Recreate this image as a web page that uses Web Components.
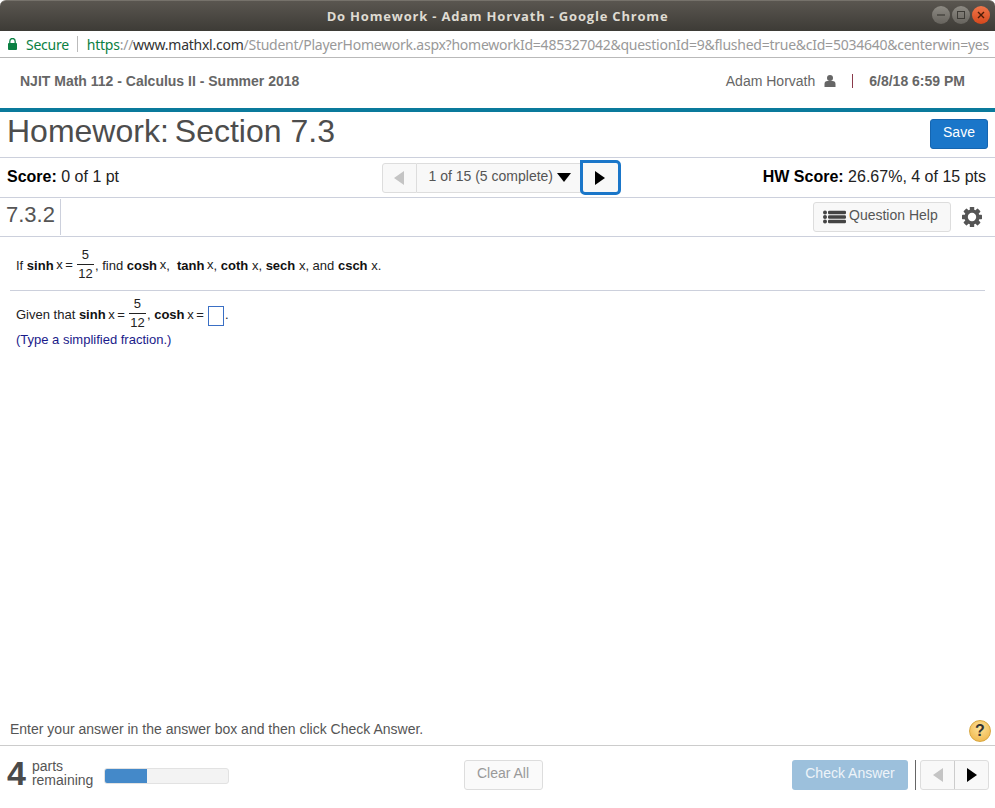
<!DOCTYPE html>
<html>
<head>
<meta charset="utf-8">
<title>Do Homework</title>
<style>
    html, body { margin: 0; padding: 0; height: 808px; overflow: hidden; background: #fff; }
    body { display: flex; flex-direction: column; font-family: "Liberation Sans", Arial, sans-serif; }
    hw-problem { flex: 1; }
</style>
</head>
<body>
<chrome-bar></chrome-bar>
<hw-header></hw-header>
<hw-title></hw-title>
<hw-score></hw-score>
<hw-question></hw-question>
<hw-problem></hw-problem>
<hw-footer></hw-footer>

<script>
const LEFT_ARROW = (c) => `<svg width="10" height="14" viewBox="0 0 10 14"><path d="M10 0V14L0 7Z" fill="${c}"/></svg>`;
const RIGHT_ARROW = `<svg width="10" height="14" viewBox="0 0 10 14"><path d="M0 0V14L10 7Z" fill="#000"/></svg>`;

class Base extends HTMLElement {
    constructor() {
        super();
        this.attachShadow({ mode: 'open' });
        this.shadowRoot.innerHTML = this.markup();
    }
}

class ChromeBar extends Base {
    markup() {
        return `
        <style>
            :host { display: block; }
            .title {
                height: 31px;
                box-sizing: border-box;
                display: flex; align-items: center; justify-content: center;
                position: relative;
                background: linear-gradient(#5a5650, #3d3b36);
                border-top: 1px solid #76726b;
                border-radius: 6px 6px 0 0;
                color: #dfdbd2;
                font: bold 13px "Open Sans", sans-serif;
                letter-spacing: 0.8px;
            }
            .btns { position: absolute; right: 5px; top: 5px; display: flex; gap: 2px; }
            .btn {
                width: 18px; height: 18px; border-radius: 50%;
                background: linear-gradient(#8d8a83, #66635d);
                display: flex; align-items: center; justify-content: center;
            }
            .btn.close { background: linear-gradient(#f0764a, #d4481c); }
            .url {
                height: 26px;
                display: flex; align-items: center;
                border-bottom: 1px solid #b9b9b9;
                font: 14px "Noto Sans", sans-serif;
                letter-spacing: -0.25px;
                background: #fff;
                white-space: nowrap;
                overflow: hidden;
            }
            .lock { margin-left: 8px; width: 9px; height: 12px; flex: none; }
            .sec { color: #0b8043; margin-left: 9px; }
            .sep { width: 1px; height: 16px; background: #bbb; margin: 0 9px 0 8px; flex: none; }
            .g { color: #0b8043; }
            .h { color: #999; }
            .d { color: #333; }
        </style>
        <div class="title">Do Homework - Adam Horvath - Google Chrome
            <div class="btns">
                <div class="btn"><svg width="10" height="10"><path d="M1 5H9" stroke="#3d3b36" stroke-width="1.2"/></svg></div>
                <div class="btn"><svg width="10" height="10"><rect x="1.5" y="1.5" width="7" height="7" fill="none" stroke="#3d3b36"/></svg></div>
                <div class="btn close"><svg width="10" height="10"><path d="M2 2L8 8M8 2L2 8" stroke="#4a1c08" stroke-width="1.4"/></svg></div>
            </div>
        </div>
        <div class="url">
            <svg class="lock" viewBox="0 0 10 12" preserveAspectRatio="none"><path d="M2 5V3.5a3 3 0 0 1 6 0V5" fill="none" stroke="#0b8043" stroke-width="1.4"/><rect y="5" width="10" height="7" rx="1" fill="#0b8043"/></svg>
            <span class="sec">Secure</span><span class="sep"></span>
            <span><span class="g">https</span><span class="h">://</span><span class="d">www.mathxl.com</span><span class="h">/Student/PlayerHomework.aspx?homeworkId=485327042&amp;questionId=9&amp;flushed=true&amp;cId=5034640&amp;centerwin=yes</span></span>
        </div>`;
    }
}

class HwHeader extends Base {
    markup() {
        return `
        <style>
            :host {
                display: flex; align-items: center; justify-content: space-between;
                padding: 0 30px 4px 20px; box-sizing: border-box;
                border-bottom: 4px solid #0a7a9c; height: 54px;
                color: #666; font-size: 14px;
            }
            b { font-weight: bold; }
            .right { display: flex; align-items: center; }
            svg { margin-left: 9px; }
            .pipe { width: 1px; height: 14px; background: #8a3a4a; margin: 0 16px; }
        </style>
        <b>NJIT Math 112 - Calculus II - Summer 2018</b>
        <div class="right">Adam Horvath
            <svg width="12" height="12" viewBox="0 0 12 12"><circle cx="6" cy="3" r="3" fill="#666"/><path d="M0.5 12V9a3 3 0 0 1 3-3h5a3 3 0 0 1 3 3v3Z" fill="#666"/></svg>
            <span class="pipe"></span><b>6/8/18 6:59 PM</b>
        </div>`;
    }
}

class HwTitle extends Base {
    markup() {
        return `
        <style>
            :host {
                display: flex; justify-content: space-between; align-items: center;
                height: 46px; box-sizing: border-box; padding: 0 7px;
                border-bottom: 1px solid #ccd0dc;
            }
            h1 { display: flex; gap: 6px; margin: 0 0 7px; font-size: 32px; font-weight: normal; color: #4d4d4d; }
            button {
                width: 58px; height: 30px; border: 1px solid #1565b0; border-radius: 3px;
                background: #1a76c9; color: #fff; font: 14px "Liberation Sans", sans-serif; padding: 0 0 3px;
                margin: 0 0 2px;
            }
        </style>
        <h1><span>Homework:</span><span>Section 7.3</span></h1>
        <button>Save</button>`;
    }
}

class HwScore extends Base {
    markup() {
        return `
        <style>
            :host {
                display: grid; grid-template-columns: 1fr auto 1fr; align-items: center;
                height: 40px; box-sizing: border-box; padding: 0 9px 0 7px;
                border-bottom: 1px solid #ccd0dc; font-size: 16px; color: #222;
            }
            b { color: #000; }
            .l, .r { padding-bottom: 2px; }
            .r { text-align: right; }
            .pager { display: flex; align-items: center; height: 30px; margin-left: 9px; }
            .prev, .mid, .next { display: flex; align-items: center; justify-content: center; box-sizing: border-box; background: #f8f8f8; }
            .prev { width: 35px; height: 30px; border: 1px solid #ddd; border-radius: 3px 0 0 3px; }
            .mid {
                width: 164px; height: 30px; border: 1px solid #ddd; border-left: 0; color: #555; font-size: 14px;
                justify-content: flex-start; padding: 0 0 3px 12px; gap: 4px;
            }
            .mid svg { margin-top: 3px; }
            .next { width: 41px; height: 35px; border: 3px solid #1a76c9; border-radius: 0 5px 5px 5px; margin-left: -1px; }
        </style>
        <div class="l"><b>Score:</b> 0 of 1 pt</div>
        <div class="pager">
            <div class="prev">${LEFT_ARROW('#c4c4c4')}</div>
            <div class="mid">1 of 15 (5 complete) <svg width="14" height="9" viewBox="0 0 14 9"><path d="M0 0H14L7 9Z" fill="#000"/></svg></div>
            <div class="next">${RIGHT_ARROW}</div>
        </div>
        <div class="r"><b>HW Score:</b> 26.67%, 4 of 15 pts</div>`;
    }
}

class HwQuestion extends Base {
    markup() {
        return `
        <style>
            :host {
                display: flex; align-items: stretch; justify-content: space-between;
                height: 39px; box-sizing: border-box; border-bottom: 1px solid #ccd0dc;
            }
            .num {
                width: 61px; box-sizing: border-box; padding: 0 0 4px 6px; margin: 1px 0;
                border-right: 1px solid #ccd0dc; display: flex; align-items: center;
                font-size: 22px; color: #555;
            }
            .tools { display: flex; align-items: center; padding: 0 13px 0 0; gap: 11px; }
            button {
                width: 138px; height: 30px; box-sizing: border-box; border: 1px solid #ddd; border-radius: 3px;
                background: #f8f8f8; color: #555; font: 14px "Liberation Sans", sans-serif;
                display: flex; align-items: center; padding: 0 0 0 9px; gap: 3px;
            }
            button span { margin-bottom: 5px; }
        </style>
        <div class="num">7.3.2</div>
        <div class="tools">
            <button>
                <svg width="23" height="14" viewBox="0 0 23 14" fill="#444"><circle cx="2" cy="2.5" r="2"/><circle cx="2" cy="7" r="2"/><circle cx="2" cy="11.5" r="2"/><rect x="5" y="0.7" width="18" height="3.6" rx="1.2"/><rect x="5" y="5.2" width="18" height="3.6" rx="1.2"/><rect x="5" y="9.7" width="18" height="3.6" rx="1.2"/></svg>
                <span>Question Help</span>
            </button>
            <svg width="20" height="20" viewBox="0 0 20 20" fill="#555">
                <circle cx="10" cy="10" r="7.6"/>
                <rect x="7.8" y="0" width="4.4" height="20" rx="0.6"/>
                <rect x="7.8" y="0" width="4.4" height="20" rx="0.6" transform="rotate(45 10 10)"/>
                <rect x="7.8" y="0" width="4.4" height="20" rx="0.6" transform="rotate(90 10 10)"/>
                <rect x="7.8" y="0" width="4.4" height="20" rx="0.6" transform="rotate(135 10 10)"/>
                <circle cx="10" cy="10" r="4.2" fill="#fff"/>
            </svg>
        </div>`;
    }
}

class MFrac extends Base {
    markup() {
        return `
        <style>
            :host { display: inline-flex; flex-direction: column; align-items: center; vertical-align: middle; margin: 0 1px 4px 4px; }
            div { line-height: 16px; font-size: 13px; color: #222; width: 17px; text-align: center; }
            .n { border-bottom: 1px solid #222; padding-bottom: 1px; }
            .d { padding-top: 1px; }
        </style>
        <div class="n"><slot name="n"></slot></div><div class="d"><slot name="d"></slot></div>`;
    }
}

class HwProblem extends Base {
    markup() {
        return `
        <style>
            :host { display: block; font-size: 13px; color: #222; padding: 1px 10px 0 10px; }
            p { margin: 0; padding-left: 6px; }
            .q { height: 48px; padding-top: 4px; display: flex; align-items: center; white-space: pre; }
            hr { border: 0; border-top: 1px solid #ccd0dc; margin: 0; }
            .a { height: 45px; padding-top: 2px; display: flex; align-items: center; white-space: pre; }
            .hint { color: #1a1a8a; padding-left: 6px; margin-top: -6px; }
            .box { display: inline-block; width: 14px; height: 18px; border: 1px solid #3a6fc4; margin: 0 1px 0 4px; vertical-align: middle; }
            .x { margin-left: -1px; }
            .eq { margin-left: -1px; }
            b { color: #111; }
        </style>
        <p class="q"><span>If <b>sinh</b> <span class="x">x</span> <span class="eq">=</span><m-frac><span slot="n">5</span><span slot="d">12</span></m-frac>, find <b>cosh</b> <span class="x">x</span>,  <b>tanh</b> <span class="x">x</span>, <b>coth</b> x, <b>sech</b> x, and <b>csch</b> x.</span></p>
        <hr>
        <p class="a"><span>Given that <b>sinh</b> <span class="x">x</span> <span class="eq">=</span><m-frac><span slot="n">5</span><span slot="d">12</span></m-frac>, <b>cosh</b> <span class="x">x</span> <span class="eq">=</span><span class="box"></span>.</span></p>
        <div class="hint">(Type a simplified fraction.)</div>`;
    }
}

class HwFooter extends Base {
    markup() {
        return `
        <style>
            :host { display: block; color: #555; }
            .msg {
                display: flex; justify-content: space-between; align-items: center;
                height: 30px; box-sizing: border-box; padding: 0 4px 0 10px; font-size: 14px;
                border-bottom: 1px solid #ccc;
            }
            .msg > span:first-child { margin-bottom: 4px; }
            .help {
                width: 22px; height: 22px; border-radius: 50%; font: bold 16px "Liberation Sans", sans-serif; color: #333;
                background: radial-gradient(circle at 50% 35%, #fde39a, #eeb040); border: 1px solid #d9a73f;
                box-sizing: border-box; display: flex; align-items: center; justify-content: center; margin-bottom: -1px;
            }
            .bar { height: 62px; box-sizing: border-box; padding: 0 6px 4px 7px; display: grid; grid-template-columns: 1fr auto 1fr; align-items: center; }
            .parts { display: flex; align-items: center; }
            .four { font-size: 34px; font-weight: bold; color: #4a4a4a; margin-bottom: 4px; }
            .lab { font-size: 14px; line-height: 14px; margin: 0 10.5px 4px 6px; }
            .prog { width: 125px; height: 16px; box-sizing: border-box; border-radius: 3px; background: #f3f3f3; border: 1px solid #e2e2e2; overflow: hidden; margin-top: 2px; }
            .prog div { width: 42px; height: 100%; background: #4489c9; }
            .clear {
                width: 79px; height: 30px; box-sizing: border-box; border: 1px solid #ddd; border-radius: 3px; background: #fafafa;
                color: #999; font: 14px "Liberation Sans", sans-serif; padding: 0 0 5px; margin-left: 10px;
            }
            .right { display: flex; align-items: center; justify-content: flex-end; }
            .check {
                width: 116px; height: 30px; box-sizing: border-box; border: 0; border-radius: 3px; background: #9cc0dc;
                color: #eef4f9; font: 14px "Liberation Sans", sans-serif; padding: 0 0 5px;
            }
            .div { width: 1px; height: 30px; background: #666; margin: 0 4px 0 7px; }
            .nav { display: flex; height: 30px; box-sizing: border-box; border: 1px solid #ddd; border-radius: 3px; background: #f8f8f8; }
            .nav div { width: 33px; box-sizing: border-box; display: flex; align-items: center; justify-content: center; }
            .nav div + div { width: 34px; border-left: 1px solid #ccc; }
        </style>
        <div class="msg"><span>Enter your answer in the answer box and then click Check Answer.</span><span class="help">?</span></div>
        <div class="bar">
            <div class="parts"><span class="four">4</span><span class="lab">parts<br>remaining</span><div class="prog"><div></div></div></div>
            <button class="clear">Clear All</button>
            <div class="right">
                <button class="check">Check Answer</button><span class="div"></span>
                <div class="nav"><div>${LEFT_ARROW('#c4c4c4')}</div><div>${RIGHT_ARROW}</div></div>
            </div>
        </div>`;
    }
}

customElements.define('chrome-bar', ChromeBar);
customElements.define('hw-header', HwHeader);
customElements.define('hw-title', HwTitle);
customElements.define('hw-score', HwScore);
customElements.define('hw-question', HwQuestion);
customElements.define('m-frac', MFrac);
customElements.define('hw-problem', HwProblem);
customElements.define('hw-footer', HwFooter);
</script>
</body>
</html>
